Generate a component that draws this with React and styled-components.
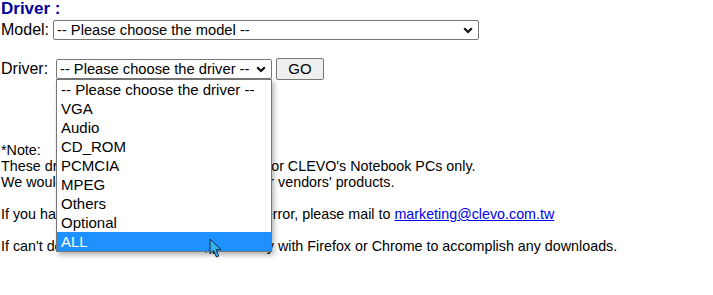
import * as React from "react";
import styled, { createGlobalStyle } from "styled-components";

const GlobalStyle = createGlobalStyle`
  html, body {
    margin: 0;
    padding: 0;
    background: #ffffff;
  }
  body {
    font-family: "Liberation Sans", Arial, sans-serif;
    color: #000000;
  }
`;

const Page = styled.div`
  padding-left: 1px;
  width: 713px;
  height: 295px;
  overflow: hidden;
  box-sizing: border-box;
`;

const Title = styled.div`
  font-size: 17px;
  font-weight: bold;
  color: #000099;
  line-height: 18px;
  height: 18px;
`;

const Row = styled.div`
  display: flex;
  align-items: center;
  height: ${(props) => props.height || 20}px;
  margin-top: ${(props) => props.top || 0}px;
  position: relative;
`;

const Label = styled.span`
  font-size: 16px;
  width: ${(props) => props.width}px;
  flex-shrink: 0;
  line-height: 18px;
`;

// closed select, drawn like Chrome's default control
const SelectBox = styled.div`
  position: relative;
  display: flex;
  align-items: center;
  width: ${(props) => props.width}px;
  height: 20px;
  flex-shrink: 0;
  padding-left: 3px;
  box-sizing: border-box;
  border: 1px solid #767676;
  border-radius: 2px;
  background: #ffffff;
  font-family: "Liberation Sans", Arial, sans-serif;
  font-size: 14.7px;
  line-height: 18px;
  color: #000000;
  white-space: nowrap;
  cursor: default;
`;

const Chevron = styled.svg`
  position: absolute;
  right: 5px;
  top: 6px;
  pointer-events: none;
`;

const GoButton = styled.button`
  margin-left: 4px;
  width: 48px;
  height: 22px;
  padding: 0;
  box-sizing: border-box;
  border: 1px solid #767676;
  border-radius: 2px;
  background: #efefef;
  font-family: "Liberation Sans", Arial, sans-serif;
  font-size: 15px;
  color: #000000;
  line-height: 18px;
`;

const ListBox = styled.ul`
  position: absolute;
  left: -1px;
  top: 19px;
  width: 216px;
  margin: 0;
  padding: 0;
  list-style: none;
  box-sizing: border-box;
  border: 1px solid #767676;
  background: #ffffff;
  box-shadow: 2px 3px 5px rgba(0, 0, 0, 0.3);
  z-index: 2;
`;

const Option = styled.li`
  height: 19px;
  line-height: 19px;
  padding-left: 4px;
  font-size: 15px;
  background: ${(props) => (props.active ? "#1e90ff" : "#ffffff")};
  color: ${(props) => (props.active ? "#ffffff" : "#000000")};
  white-space: nowrap;
`;

const Cursor = styled.svg`
  position: absolute;
  left: 152px;
  top: 158px;
  z-index: 3;
`;

const Notes = styled.div`
  margin-top: 62px;
  font-size: 14.3px;
  line-height: 16px;
  white-space: nowrap;
`;

const Para = styled.p`
  margin: 0 0 16px 0;
`;

const MailLink = styled.a`
  color: #0000ee;
  text-decoration: underline;
`;

const drivers = [
  "-- Please choose the driver --",
  "VGA",
  "Audio",
  "CD_ROM",
  "PCMCIA",
  "MPEG",
  "Others",
  "Optional",
  "ALL",
];

function ChevronIcon() {
  return (
    <Chevron width="10" height="7" viewBox="0 0 10 7">
      <polyline
        points="1.2,1.2 5,5 8.8,1.2"
        fill="none"
        stroke="#111111"
        strokeWidth="2.2"
      />
    </Chevron>
  );
}

export default function App() {
  return (
    <Page>
      <GlobalStyle />
      <Title>Driver :</Title>
      <Row top={2}>
        <Label width={52}>Model:</Label>
        <SelectBox width={426} role="combobox">
          -- Please choose the model --
          <ChevronIcon />
        </SelectBox>
      </Row>
      <Row top={18} height={22}>
        <Label width={55}>Driver:</Label>
        <SelectBox width={216} role="combobox" aria-expanded="true">
          -- Please choose the driver --
          <ChevronIcon />
          <ListBox role="listbox">
            {drivers.map((d, i) => (
              <Option key={d} role="option" active={i === drivers.length - 1}>
                {d}
              </Option>
            ))}
            <Cursor width="14" height="21" viewBox="0 0 14 21">
              <path
                d="M1 1 L1 16 L4.6 12.6 L7.4 19 L9.8 18 L7.1 11.7 L12 11.7 Z"
                fill="#35b0e8"
                stroke="#0b2a45"
                strokeWidth="1"
                strokeLinejoin="round"
              />
            </Cursor>
          </ListBox>
        </SelectBox>
        <GoButton>GO</GoButton>
      </Row>
      <Notes>
        <div>*Note:</div>
        <div>These drivers and software are optimized for CLEVO's Notebook PCs only.</div>
        <Para>We would not provide any support for other vendors' products.</Para>
        <Para>
          If you have any problems or find a bug or error, please mail to{" "}
          <MailLink href="mailto:marketing@clevo.com.tw">marketing@clevo.com.tw</MailLink>
        </Para>
        <Para>
          If can't download the driver in IE, please try with Firefox or Chrome to accomplish any downloads.
        </Para>
      </Notes>
    </Page>
  );
}
